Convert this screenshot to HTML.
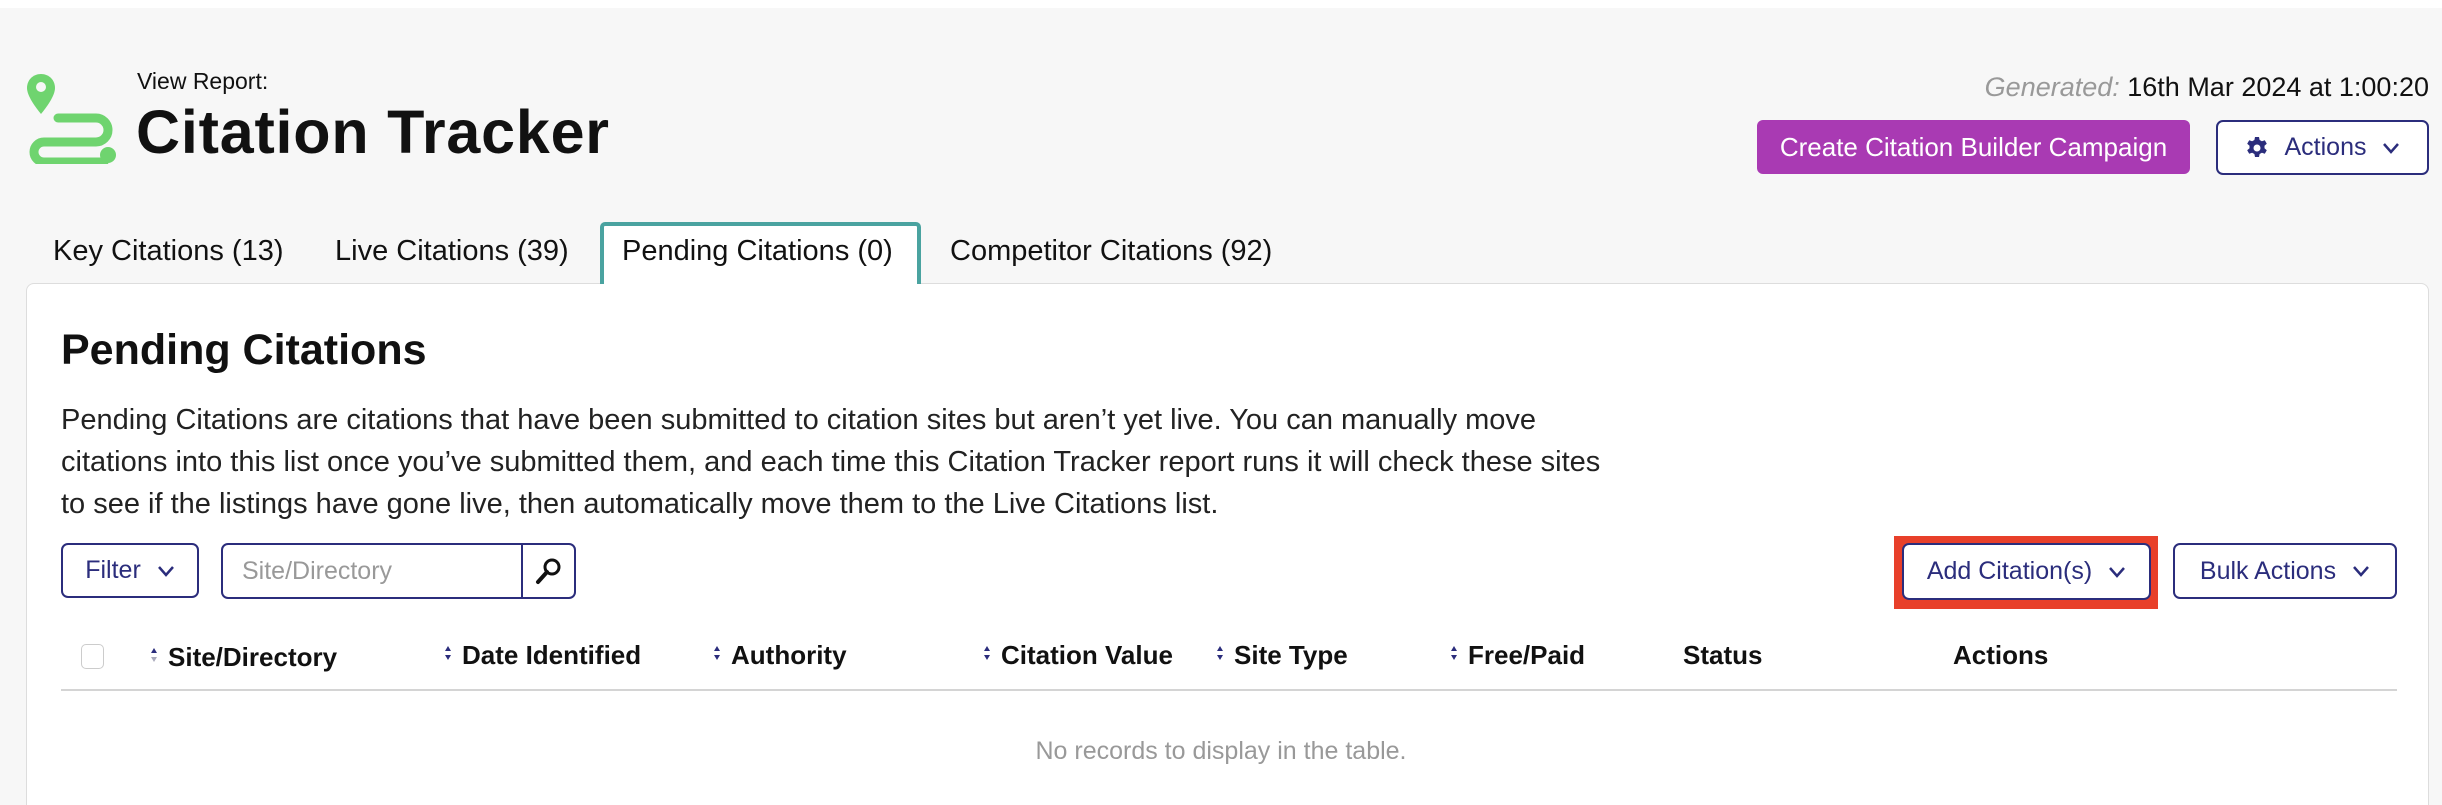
<!DOCTYPE html>
<html><head><meta charset="utf-8"><style>
*{box-sizing:border-box;margin:0;padding:0}
html,body{width:2442px;height:805px;overflow:hidden}
body{background:#fff;font-family:"Liberation Sans",sans-serif;position:relative;color:#111}
.bg{position:absolute;left:0;top:8px;width:2442px;height:797px;background:#f7f7f7}
.a{position:absolute;white-space:nowrap}
.btn{position:absolute;border:2px solid #2b2d7c;border-radius:7px;background:#fff;color:#2b2d7c;font-size:25px;display:flex;align-items:center;justify-content:center;gap:16px}
.chev{width:18px;height:12px}
.th{position:absolute;top:640px;font-size:26px;font-weight:bold;color:#111;white-space:nowrap}
.sort{display:inline-block;width:8px;margin-right:10px;vertical-align:3px}
</style></head><body>
<div class="bg"></div>
<svg class="a" style="left:24px;top:72px" width="96" height="92" viewBox="0 0 96 92">
<path d="M17 2c-8 0-14 6-14 14 0 8 9 20 14 26 5-6 14-18 14-26 0-8-6-14-14-14z" fill="#6fd46f"/>
<circle cx="17" cy="15" r="5" fill="#f7f7f7"/>
<path d="M34 46h38a12 12 0 0 1 0 24H20a10 10 0 0 0 0 20h60" fill="none" stroke="#6fd46f" stroke-width="9" stroke-linecap="round"/>
<circle cx="84" cy="83" r="8" fill="#6fd46f"/>
</svg>
<div class="a" style="left:137px;top:68px;font-size:23px;color:#111">View Report:</div>
<div class="a" style="left:136px;top:97px;font-size:61px;font-weight:bold;letter-spacing:0.8px;color:#111">Citation Tracker</div>
<div class="a" style="right:13px;top:72px;font-size:27px;color:#111"><i style="color:#999">Generated:</i> 16th Mar 2024 at 1:00:20</div>
<div class="a" style="left:1757px;top:120px;width:433px;height:54px;background:#a93ab3;border-radius:6px;color:#fff;font-size:26px;display:flex;align-items:center;justify-content:center">Create Citation Builder Campaign</div>
<div class="btn" style="left:2216px;top:120px;width:213px;height:55px">
<svg width="24" height="24" viewBox="0 0 24 24"><path fill="#2b2d7c" d="M10 1h4l.6 3 2.3 1.3 2.9-1 2 3.4-2.3 2v2.6l2.3 2-2 3.4-2.9-1-2.3 1.3-.6 3h-4l-.6-3-2.3-1.3-2.9 1-2-3.4 2.3-2v-2.6l-2.3-2 2-3.4 2.9 1L9.4 4z"/><circle cx="12" cy="12" r="3.5" fill="#fff"/></svg>
<span>Actions</span><svg class="chev" viewBox="0 0 18 12"><path d="M2 2l7 8 7-8" fill="none" stroke="#2b2d7c" stroke-width="2.5"/></svg></div>
<div class="a" style="left:26px;top:283px;width:2403px;height:530px;background:#fff;border:1px solid #ddd;border-radius:8px"></div>
<div class="a" style="left:600px;top:222px;width:321px;height:62px;background:#fff;border:4px solid #4aa3a0;border-bottom:none;border-radius:5px 5px 0 0"></div>
<div class="a" style="left:53px;top:235px;font-size:29px">Key Citations (13)</div>
<div class="a" style="left:335px;top:235px;font-size:29px">Live Citations (39)</div>
<div class="a" style="left:622px;top:235px;font-size:29px">Pending Citations (0)</div>
<div class="a" style="left:950px;top:235px;font-size:29px">Competitor Citations (92)</div>
<div class="a" style="left:61px;top:326px;font-size:43px;font-weight:bold">Pending Citations</div>
<div class="a" style="left:61px;top:399px;font-size:29px;line-height:42px;color:#222">Pending Citations are citations that have been submitted to citation sites but aren’t yet live. You can manually move<br>citations into this list once you’ve submitted them, and each time this Citation Tracker report runs it will check these sites<br>to see if the listings have gone live, then automatically move them to the Live Citations list.</div>
<div class="btn" style="left:61px;top:543px;width:138px;height:55px">Filter<svg class="chev" viewBox="0 0 18 12"><path d="M2 2l7 8 7-8" fill="none" stroke="#2b2d7c" stroke-width="2.5"/></svg></div>
<div class="a" style="left:221px;top:543px;width:355px;height:56px;border:2px solid #2b2d7c;border-radius:7px;background:#fff"></div>
<div class="a" style="left:521px;top:543px;width:2px;height:56px;background:#2b2d7c"></div>
<div class="a" style="left:242px;top:557px;font-size:25px;color:#999">Site/Directory</div>
<svg class="a" style="left:534px;top:556px" width="30" height="30" viewBox="0 0 30 30"><circle cx="18" cy="11" r="7" fill="none" stroke="#111" stroke-width="3"/><path d="M13 16l-9 10" stroke="#111" stroke-width="4" stroke-linecap="round"/></svg>
<div class="a" style="left:1894px;top:536px;width:264px;height:73px;background:#e8402a"></div>
<div class="btn" style="left:1902px;top:543px;width:249px;height:57px">Add Citation(s)<svg class="chev" viewBox="0 0 18 12"><path d="M2 2l7 8 7-8" fill="none" stroke="#2b2d7c" stroke-width="2.5"/></svg></div>
<div class="btn" style="left:2173px;top:543px;width:224px;height:56px">Bulk Actions<svg class="chev" viewBox="0 0 18 12"><path d="M2 2l7 8 7-8" fill="none" stroke="#2b2d7c" stroke-width="2.5"/></svg></div>
<div class="a" style="left:81px;top:644px;width:23px;height:25px;border:1.5px solid #ccc;border-radius:5px"></div>
<div class="th" style="left:150px;top:642px"><svg class="sort" viewBox="0 0 8 16" height="16"><path d="M4 1l3 5H1z" fill="#2b2d7c"/><path d="M4 15l3-5H1z" fill="#aab"/></svg>Site/Directory</div>
<div class="th" style="left:444px"><svg class="sort" viewBox="0 0 8 16" height="16"><path d="M4 1l3 5H1zM4 15l3-5H1z" fill="#2b2d7c"/></svg>Date Identified</div>
<div class="th" style="left:713px"><svg class="sort" viewBox="0 0 8 16" height="16"><path d="M4 1l3 5H1zM4 15l3-5H1z" fill="#2b2d7c"/></svg>Authority</div>
<div class="th" style="left:983px"><svg class="sort" viewBox="0 0 8 16" height="16"><path d="M4 1l3 5H1zM4 15l3-5H1z" fill="#2b2d7c"/></svg>Citation Value</div>
<div class="th" style="left:1216px"><svg class="sort" viewBox="0 0 8 16" height="16"><path d="M4 1l3 5H1zM4 15l3-5H1z" fill="#2b2d7c"/></svg>Site Type</div>
<div class="th" style="left:1450px"><svg class="sort" viewBox="0 0 8 16" height="16"><path d="M4 1l3 5H1zM4 15l3-5H1z" fill="#2b2d7c"/></svg>Free/Paid</div>
<div class="th" style="left:1683px">Status</div>
<div class="th" style="left:1953px">Actions</div>
<div class="a" style="left:61px;top:689px;width:2336px;height:2px;background:#d4d4d4"></div>
<div class="a" style="left:0;width:2442px;top:737px;text-align:center;font-size:25px;color:#999">No records to display in the table.</div>
</body></html>
